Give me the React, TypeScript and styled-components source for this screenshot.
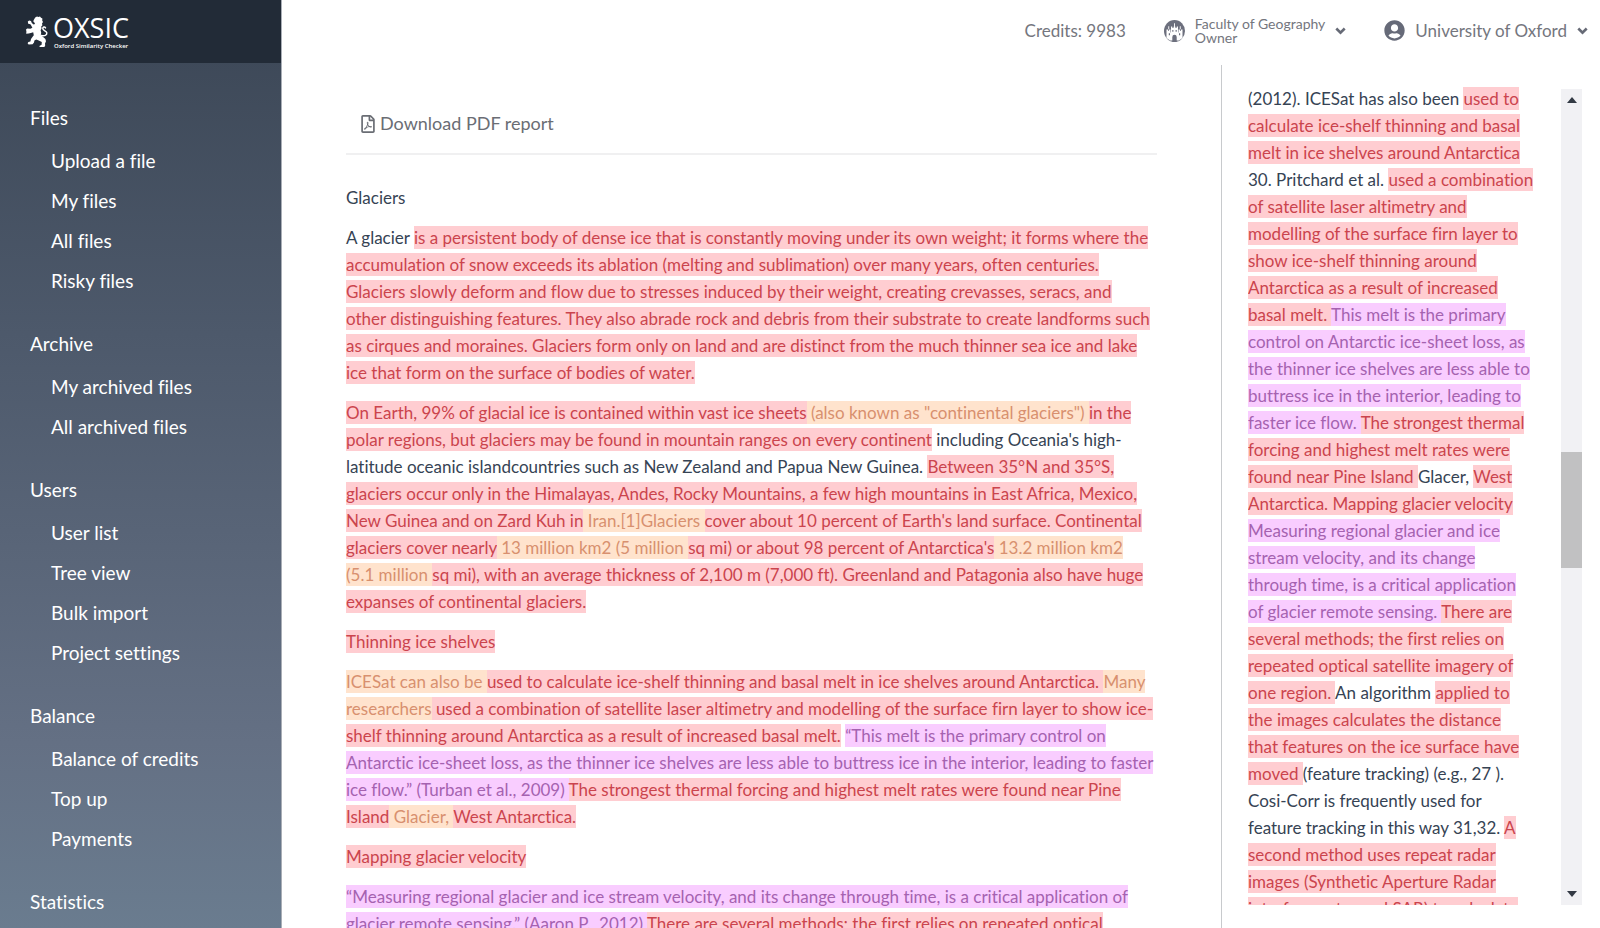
import React from "react";
import styled, { createGlobalStyle } from "styled-components";
import { FaRegFilePdf, FaUserCircle } from "react-icons/fa";

type Tone = "plain" | "red" | "orange" | "purple";
type Segment = [Tone, string];
type Line = Segment[];

const tones: Record<Tone, { ink: string; fill: string }> = {
  plain: { ink: "#364354", fill: "transparent" },
  red: { ink: "#cb444d", fill: "#ffcdd1" },
  orange: { ink: "#d8906f", fill: "#ffe3cd" },
  purple: { ink: "#a562b0", fill: "#f9cdff" },
};

const menu = [
  { title: "Files", items: ["Upload a file", "My files", "All files", "Risky files"] },
  { title: "Archive", items: ["My archived files", "All archived files"] },
  { title: "Users", items: ["User list", "Tree view", "Bulk import", "Project settings"] },
  { title: "Balance", items: ["Balance of credits", "Top up", "Payments"] },
  { title: "Statistics", items: [] },
];

const report: Line[][] = [
  [[["plain", "Glaciers"]]],
  [
    [["plain", "A glacier "], ["red", "is a persistent body of dense ice that is constantly moving under its own weight; it forms where the"]],
    [["red", "accumulation of snow exceeds its ablation (melting and sublimation) over many years, often centuries."]],
    [["red", "Glaciers slowly deform and flow due to stresses induced by their weight, creating crevasses, seracs, and"]],
    [["red", "other distinguishing features. They also abrade rock and debris from their substrate to create landforms such"]],
    [["red", "as cirques and moraines. Glaciers form only on land and are distinct from the much thinner sea ice and lake"]],
    [["red", "ice that form on the surface of bodies of water."]],
  ],
  [
    [["red", "On Earth, 99% of glacial ice is contained within vast ice sheets"], ["orange", " (also known as \"continental glaciers\") "], ["red", "in the"]],
    [["red", "polar regions, but glaciers may be found in mountain ranges on every continent"], ["plain", " including Oceania's high-"]],
    [["plain", "latitude oceanic islandcountries such as New Zealand and Papua New Guinea. "], ["red", "Between 35°N and 35°S,"]],
    [["red", "glaciers occur only in the Himalayas, Andes, Rocky Mountains, a few high mountains in East Africa, Mexico,"]],
    [["red", "New Guinea and on Zard Kuh in"], ["orange", " Iran.[1]Glaciers "], ["red", "cover about 10 percent of Earth's land surface. Continental"]],
    [["red", "glaciers cover nearly"], ["orange", " 13 million km2 (5 million "], ["red", "sq mi) or about 98 percent of Antarctica's"], ["orange", " 13.2 million km2"]],
    [["orange", "(5.1 million "], ["red", "sq mi), with an average thickness of 2,100 m (7,000 ft). Greenland and Patagonia also have huge"]],
    [["red", "expanses of continental glaciers."]],
  ],
  [[["red", "Thinning ice shelves"]]],
  [
    [["orange", "ICESat can also be "], ["red", "used to calculate ice-shelf thinning and basal melt in ice shelves around Antarctica. "], ["orange", "Many"]],
    [["orange", "researchers"], ["red", " used a combination of satellite laser altimetry and modelling of the surface firn layer to show ice-"]],
    [["red", "shelf thinning around Antarctica as a result of increased basal melt."], ["plain", " "], ["purple", "“This melt is the primary control on"]],
    [["purple", "Antarctic ice-sheet loss, as the thinner ice shelves are less able to buttress ice in the interior, leading to faster"]],
    [["purple", "ice flow.” (Turban et al., 2009) "], ["red", "The strongest thermal forcing and highest melt rates were found near Pine"]],
    [["red", "Island"], ["orange", " Glacier, "], ["red", "West Antarctica."]],
  ],
  [[["red", "Mapping glacier velocity"]]],
  [
    [["purple", "“Measuring regional glacier and ice stream velocity, and its change through time, is a critical application of"]],
    [["purple", "glacier remote sensing.” (Aaron P., 2012) "], ["red", "There are several methods; the first relies on repeated optical"]],
  ],
];

const source: Line[] = [
  [["plain", "(2012). ICESat has also been "], ["red", "used to"]],
  [["red", "calculate ice-shelf thinning and basal"]],
  [["red", "melt in ice shelves around Antarctica"]],
  [["plain", "30. Pritchard et al. "], ["red", "used a combination"]],
  [["red", "of satellite laser altimetry and"]],
  [["red", "modelling of the surface firn layer to"]],
  [["red", "show ice-shelf thinning around"]],
  [["red", "Antarctica as a result of increased"]],
  [["red", "basal melt. "], ["purple", "This melt is the primary"]],
  [["purple", "control on Antarctic ice-sheet loss, as"]],
  [["purple", "the thinner ice shelves are less able to"]],
  [["purple", "buttress ice in the interior, leading to"]],
  [["purple", "faster ice flow. "], ["red", "The strongest thermal"]],
  [["red", "forcing and highest melt rates were"]],
  [["red", "found near Pine Island "], ["plain", "Glacer, "], ["red", "West"]],
  [["red", "Antarctica. Mapping glacier velocity"]],
  [["purple", "Measuring regional glacier and ice"]],
  [["purple", "stream velocity, and its change"]],
  [["purple", "through time, is a critical application"]],
  [["purple", "of glacier remote sensing. "], ["red", "There are"]],
  [["red", "several methods; the first relies on"]],
  [["red", "repeated optical satellite imagery of"]],
  [["red", "one region. "], ["plain", "An algorithm "], ["red", "applied to"]],
  [["red", "the images calculates the distance"]],
  [["red", "that features on the ice surface have"]],
  [["red", "moved "], ["plain", "(feature tracking) (e.g., 27 )."]],
  [["plain", "Cosi-Corr is frequently used for"]],
  [["plain", "feature tracking in this way 31,32. "], ["red", "A"]],
  [["red", "second method uses repeat radar"]],
  [["red", "images (Synthetic Aperture Radar"]],
  [["red", "interferometry and SAR) to calculate"]],
];

const GlobalStyle = createGlobalStyle`
  *, *::before, *::after { box-sizing: border-box; }
  body {
    margin: 0;
    background: #fff;
    color: #364354;
    font-family: Lato, "Open Sans", sans-serif;
    font-size: 17px;
    line-height: 27px;
    font-variant-ligatures: none;
  }
  button { font: inherit; color: inherit; background: none; border: 0; padding: 0; cursor: pointer; }
  a { color: inherit; text-decoration: none; }
`;

const Page = styled.div`
  display: grid;
  grid-template-columns: 282px minmax(0, 1fr);
  height: 100vh;
  overflow: hidden;
`;

const Sidebar = styled.aside`
  display: flex;
  flex-direction: column;
  min-height: 0;
  overflow: hidden;
  border-right: 1px solid #a9aeb6;
  background: linear-gradient(#3b4655, #4d596b 36%, #647084 80%, #6a7c8f);
  color: #fff;
`;

const Brand = styled.a`
  display: flex;
  flex: none;
  align-items: center;
  gap: 5px;
  height: 63px;
  padding-left: 26px;
  background: #222b37;
`;

const BrandText = styled.span`
  display: flex;
  flex-direction: column;
`;

const BrandName = styled.span`
  font-family: "Open Sans", sans-serif;
  font-size: 27px;
  line-height: 28px;
`;

const BrandTagline = styled.span`
  font-family: "Open Sans", sans-serif;
  font-size: 6px;
  font-weight: 600;
  line-height: 8px;
  padding-left: 1px;
`;

const Menu = styled.nav`
  display: flex;
  flex-direction: column;
  gap: 23px;
  padding: 35px 30px 0;
  font-size: 19px;
  line-height: 40px;
`;

const MenuTitle = styled.h2`
  margin: 0 0 3px;
  font-size: inherit;
  font-weight: 400;
`;

const MenuList = styled.ul`
  margin: 0;
  padding: 0 0 0 21px;
  list-style: none;
`;

const MenuLink = styled.a`
  display: block;
`;

const Workspace = styled.div`
  display: flex;
  flex-direction: column;
  min-height: 0;
`;

const TopBar = styled.header`
  display: flex;
  flex: none;
  align-items: center;
  justify-content: flex-end;
  gap: 38px;
  height: 65px;
  padding: 0 12px 4px 0;
  color: #74767e;
`;

const Picker = styled.button`
  display: flex;
  align-items: center;
  gap: 10px;
  text-align: left;
`;

const Stack = styled.span`
  display: flex;
  flex-direction: column;
  font-size: 14px;
  line-height: 14px;
`;

const Content = styled.div`
  display: grid;
  flex: 1;
  grid-template-columns: minmax(0, 1fr) 379px;
  min-height: 0;
`;

const Report = styled.main`
  min-height: 0;
  overflow: hidden;
  padding: 45px 64px 0;
`;

const Toolbar = styled.div`
  display: flex;
  padding: 0 13px 16px;
  border-bottom: 2px solid #f0f0f1;
  margin-bottom: 29px;
`;

const DownloadLink = styled.a`
  display: flex;
  align-items: center;
  gap: 3px;
  color: #6a6d74;
  font-size: 18px;
`;

const Paragraph = styled.p`
  margin: 0 0 13px;
  white-space: pre;
`;

const Highlight = styled.mark<{ $tone: Tone }>`
  padding: 1px 0;
  background: ${(p) => tones[p.$tone].fill};
  color: ${(p) => tones[p.$tone].ink};
`;

const SourcePanel = styled.section`
  display: flex;
  align-items: stretch;
  justify-content: space-between;
  min-height: 0;
  border-left: 1px solid #c8cacd;
  padding: 20px 18px 23px 26px;
`;

const SourceText = styled.div`
  flex: 1;
  min-width: 0;
  overflow: hidden;
`;

const ScrollBar = styled.div`
  display: flex;
  flex: none;
  flex-direction: column;
  width: 21px;
  margin-top: 4px;
  background: #f1f1f4;
`;

const ScrollArrow = styled.button`
  display: flex;
  align-items: center;
  justify-content: center;
  height: 22px;
`;

const ScrollTrack = styled.div`
  display: grid;
  flex: 1;
  grid-template-rows: 341fr 115fr 315fr;
`;

const ScrollThumb = styled.div`
  grid-row: 2;
  background: #c1c1c2;
`;

function Lines({ lines }: { lines: Line[] }) {
  return (
    <Paragraph>
      {lines.map((line, i) => (
        <React.Fragment key={i}>
          {line.map(([tone, text], j) =>
            tone === "plain" ? text : <Highlight key={j} $tone={tone}>{text}</Highlight>
          )}
          {i < lines.length - 1 && <br />}
        </React.Fragment>
      ))}
    </Paragraph>
  );
}

function LionLogo() {
  return (
    <svg width="22" height="31" viewBox="0 0 22 31" fill="#fff" aria-hidden="true">
      <path d="M9.2 1.6 11 .4l1.4.6 1.6-.6 1 1.4 1.4.8-.2 1.8.8 1.6-1 1.4.4 1.8-1.2 1.2.4 1.8-1 2 .6 2.4-.4 2.6 2 1.6 2.6 2.2.6 2.2-1 2.2.2 2-.8 1.6-4.6.2-.4-1.2 2.2-1.2.2-2.8-3.6-1.8-2-.8-1.8 1.2-.4 2-1.4 1.6-4 .4-1-1.4.8-1.2 2-.4.6-2.6 1.8-2.4 1-1.4-.6-3-2.4.8-2.2.4-2.4.4L.4 15.4 0 13.6l1.2-1.2 3.2.4 2-1-1.2-2.2-.8-1.4-2.2-.4-.4-2.2 1.4-1.2 1.8.6.8 2 1.8 1.6 1.4-.6-.6-1.6-1-.6.2-1.6z" />
      <path d="M15.5 19.5c3 .6 5.500-.2 5.300-2.600-.2-2-4-2.200-4-4.300 0-1.600 1.800-2.200 2.700-.7" fill="none" stroke="#fff" strokeWidth="1.5" strokeLinecap="round" />
    </svg>
  );
}

function CastleIcon() {
  return (
    <svg width="21" height="22" viewBox="0 0 21 22" aria-hidden="true">
      <ellipse cx="10.5" cy="11" rx="10.5" ry="11" fill="#6c6f7d" />
      <path d="M2.5 9.5v8.5l3.500 2.600h9l3.500-2.600V9.500h-1.500v1.300h-1V9.500h-1.500v3H14V6.500h-1.200v1.300h-1.500V6.500H9.700v1.300H8.200V6.500H7v6h-.5v-3H5v1.300H4V9.500z" fill="#fff" />
      <path d="M8.3 22v-5a2.200 2.200 0 0 1 4.400 0v5z" fill="#6c6f7d" />
      <path d="M10.1 3.200h.9v4h-.9zM4.300 6.200h.9v3h-.9zM15.800 6.200h.9v3h-.9z" fill="#fff" />
      <path d="M4.8 13.200h1.200v2H4.800zM15 13.200h1.200v2H15zM8.300 10h1.100v1.800H8.300zM11.600 10h1.100v1.800h-1.100z" fill="#6c6f7d" />
    </svg>
  );
}

function Chevron() {
  return (
    <svg width="11" height="8" viewBox="0 0 11 8" aria-hidden="true">
      <path d="M1.3 1.5 5.5 5.700l4.200-4.200" fill="none" stroke="#666a76" strokeWidth="2.6" />
    </svg>
  );
}

export default function App() {
  return (
    <>
      <GlobalStyle />
      <Page>
        <Sidebar>
          <Brand href="#">
            <LionLogo />
            <BrandText>
              <BrandName>OXSIC</BrandName>
              <BrandTagline>Oxford Similarity Checker</BrandTagline>
            </BrandText>
          </Brand>
          <Menu aria-label="Main">
            {menu.map((section) => (
              <section key={section.title}>
                <MenuTitle>{section.title}</MenuTitle>
                <MenuList>
                  {section.items.map((item) => (
                    <li key={item}>
                      <MenuLink href="#">{item}</MenuLink>
                    </li>
                  ))}
                </MenuList>
              </section>
            ))}
          </Menu>
        </Sidebar>
        <Workspace>
          <TopBar>
            <span>Credits: 9983</span>
            <Picker type="button">
              <CastleIcon />
              <Stack>
                <span>Faculty of Geography</span>
                <span>Owner</span>
              </Stack>
              <Chevron />
            </Picker>
            <Picker type="button">
              <FaUserCircle size={21} color="#666a78" />
              <span>University of Oxford</span>
              <Chevron />
            </Picker>
          </TopBar>
          <Content>
            <Report>
              <Toolbar>
                <DownloadLink href="#">
                  <FaRegFilePdf size={18} />
                  Download PDF report
                </DownloadLink>
              </Toolbar>
              {report.map((lines, i) => (
                <Lines key={i} lines={lines} />
              ))}
            </Report>
            <SourcePanel aria-label="Matched source">
              <SourceText>
                <Lines lines={source} />
              </SourceText>
              <ScrollBar>
                <ScrollArrow type="button" aria-label="Scroll up">
                  <svg width="10" height="6" viewBox="0 0 10 6"><path d="M0 6 5 0l5 6z" fill="#333a44" /></svg>
                </ScrollArrow>
                <ScrollTrack>
                  <ScrollThumb />
                </ScrollTrack>
                <ScrollArrow type="button" aria-label="Scroll down">
                  <svg width="10" height="6" viewBox="0 0 10 6"><path d="M0 0h10L5 6z" fill="#333a44" /></svg>
                </ScrollArrow>
              </ScrollBar>
            </SourcePanel>
          </Content>
        </Workspace>
      </Page>
    </>
  );
}
